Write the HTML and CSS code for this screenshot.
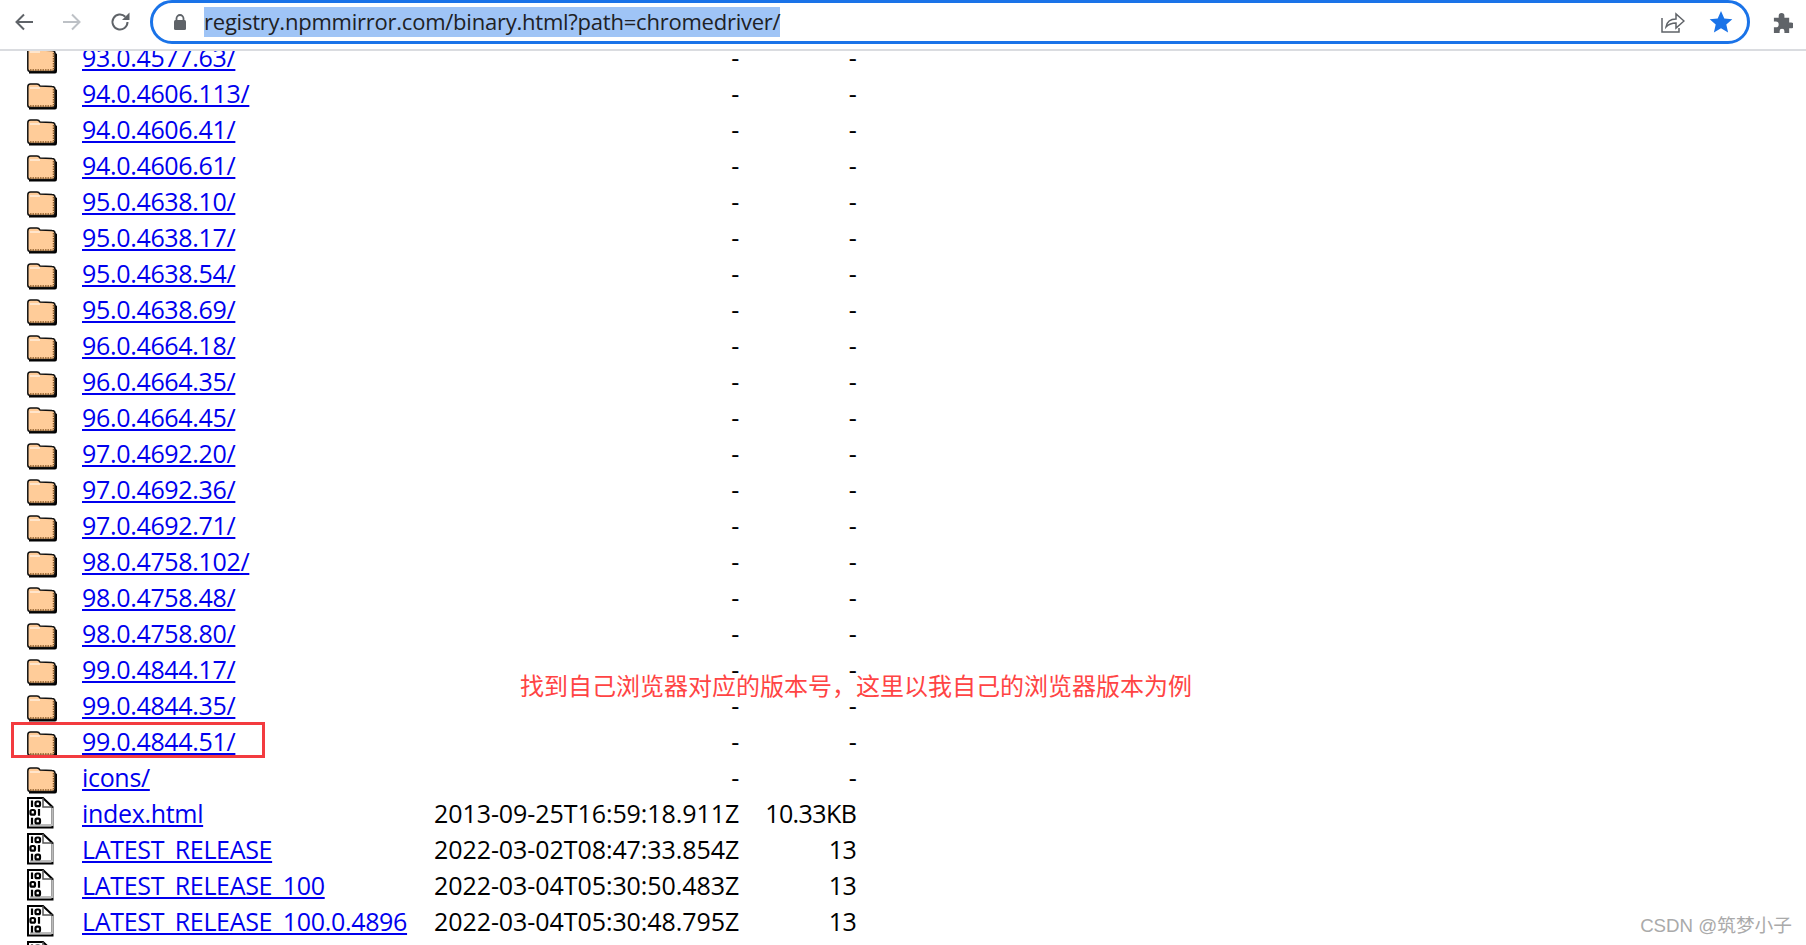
FILE: index.html
```html
<!DOCTYPE html>
<html lang="en">
<head>
    <meta charset="UTF-8">
    <meta name="viewport" content="width=device-width, initial-scale=1.0">
    <title>registry.npmmirror.com/binary.html?path=chromedriver/</title>
    <link rel="stylesheet" href="styles.css">
</head>
<body>
    <svg class="sprites" width="0" height="0">
        <symbol id="folder" viewBox="0 0 30 27">
            <path d="M2 26.500 L28 26.500 Q30 26.500 30 24 L30 7 L27 5 L27 24 L2 24 Z" fill="#000"/>
            <path d="M.8 4 Q.8 1 3.500 1 L10 1 Q12 1 13 3 L25 3.500 Q28 3.500 28 6.500 L28 22 Q28 24.500 25 24.500 L3.500 24.500 Q.8 24.500 .8 22 Z" fill="#fc9" stroke="#111" stroke-width="1.500"/>
            <path d="M3 5 L13 5" stroke="#fff" stroke-width="1"/>
            <path d="M3 23 L26.500 23 M26.500 6 L26.500 22" stroke="#8a5a28" stroke-width="1.500" stroke-dasharray="1.500 1"/>
        </symbol>
        <symbol id="binary" viewBox="0 0 27 32">
            <path d="M1 1 L16 1 L25.500 10 L25.500 30.500 L1 30.500 Z" fill="#fff" stroke="#000" stroke-width="2"/>
            <path d="M25.500 11 L25.500 28 L3 28" fill="none" stroke="#bbb" stroke-width="2"/>
            <path d="M16 1 L16 10 L25.500 10" fill="none" stroke="#555" stroke-width="1.500"/>
            <g fill="none" stroke="#000" stroke-width="2.200">
                <path d="M5 3.500 L5 10 M12 12 L12 18.700 M5 20.700 L5 27.500"/>
                <rect x="8.500" y="4.500" width="4.500" height="4.700" rx="1.500"/>
                <rect x="3.500" y="13" width="4.500" height="4.700" rx="1.500"/>
                <rect x="8.500" y="21.700" width="4.500" height="4.700" rx="1.500"/>
            </g>
        </symbol>
    </svg>

    <header class="toolbar">
        <svg class="tool-icon" viewBox="0 0 20 20"><path d="M19 10H3M10 2.500 2.500 10l7.500 7.500" fill="none" stroke="#5f6368" stroke-width="2"/></svg>
        <svg class="tool-icon" viewBox="0 0 20 20"><path d="M1 10h16M10 2.500l7.500 7.500-7.500 7.500" fill="none" stroke="#bdc1c6" stroke-width="2"/></svg>
        <svg class="tool-icon" viewBox="0 0 20 20"><path d="M17.500 10a7.500 7.500 0 1 1-2.200-5.300" fill="none" stroke="#5f6368" stroke-width="2"/><path d="M19.500 .5v7.500H12z" fill="#5f6368"/></svg>
        <div class="omnibox">
            <svg class="lock" viewBox="0 0 12 16"><path d="M2.500 7V4.500a3.500 3.500 0 0 1 7 0V7" fill="none" stroke="#5f6368" stroke-width="1.800"/><rect x="0" y="6" width="12" height="10" rx="1.500" fill="#5f6368"/></svg>
            <span class="url">registry.npmmirror.com/binary.html?path=chromedriver/</span>
            <svg class="share" viewBox="0 0 24 22"><path d="M1 7v14h17v-4" fill="none" stroke="#5f6368" stroke-width="1.500"/><path d="M5 16c1-6 5-8 10-8V3l8 7-8 7v-5c-4 0-7 1-10 4z" fill="none" stroke="#5f6368" stroke-width="1.500"/></svg>
            <svg class="star" viewBox="0 0 24 24"><path d="M12 1l3.300 7.500 8 .7-6 5.300 1.800 8L12 18.300 4.900 22.500l1.800-8-6-5.300 8-.7z" fill="#1a73e8"/></svg>
        </div>
        <svg class="puzzle" viewBox="0 0 22 22"><path d="M2 6h5V4a3 3 0 0 1 6 0v2h5v5h2a3 3 0 0 1 0 6h-2v5h-5v-2a2.500 2.500 0 0 0-5 0v2H2v-6h2a3 3 0 0 0 0-6H2z" fill="#5f6368"/></svg>
    </header>

    <main class="listing">
        <table class="files" id="files"></table>
        <div class="highlight-box"></div>
        <p class="note">找到自己浏览器对应的版本号，这里以我自己的浏览器版本为例</p>
        <p class="watermark">CSDN @筑梦小子</p>
    </main>

    <script>
        // 目录列表
        const dirs = ['93.0.4577.63/', '94.0.4606.113/', '94.0.4606.41/', '94.0.4606.61/', '95.0.4638.10/',
            '95.0.4638.17/', '95.0.4638.54/', '95.0.4638.69/', '96.0.4664.18/', '96.0.4664.35/', '96.0.4664.45/',
            '97.0.4692.20/', '97.0.4692.36/', '97.0.4692.71/', '98.0.4758.102/', '98.0.4758.48/', '98.0.4758.80/',
            '99.0.4844.17/', '99.0.4844.35/', '99.0.4844.51/', 'icons/'];
        const files = [
            ['index.html', '2013-09-25T16:59:18.911Z', '10.33KB'],
            ['LATEST_RELEASE', '2022-03-02T08:47:33.854Z', '13'],
            ['LATEST_RELEASE_100', '2022-03-04T05:30:50.483Z', '13'],
            ['LATEST_RELEASE_100.0.4896', '2022-03-04T05:30:48.795Z', '13'],
            ['', '', '']
        ];

        function row(icon, name, date, size) {
            const link = name ? `<a href="#">${name}</a>` : '';
            return `<tr><td class="icon"><svg class="${icon}"><use href="#${icon}"/></svg></td>` +
                `<td class="name">${link}</td><td class="date">${date}</td><td class="size">${size}</td></tr>`;
        }

        document.getElementById('files').innerHTML =
            dirs.map(d => row('folder', d, '-', '-')).join('') +
            files.map(f => row('binary', f[0], f[1], f[2])).join('');
    </script>
</body>
</html>
```

FILE: styles.css
```css
* {
    box-sizing: border-box;
    margin: 0;
    padding: 0;
}
html, body {
    height: 100%;
    overflow: hidden;
}
body {
    display: flex;
    flex-direction: column;
    background: white;
    font-family: 'Open Sans', 'Noto Sans CJK SC', sans-serif;
}
.sprites {
    position: absolute;
}
.toolbar {
    flex: none;
    height: 51px;
    display: flex;
    align-items: flex-start;
    background: white;
    border-bottom: 2px solid #dadce0;
    padding-left: 14px;
}
.tool-icon {
    width: 20px;
    height: 20px;
    margin: 12px 28px 0 0;
}
.tool-icon:nth-child(3) {
    margin-right: 22px;
}
.omnibox {
    width: 1597px;
    height: 44px;
    margin-left: -2px;
    flex: none;
    width: 1600px;
    display: flex;
    align-items: center;
    border: 3px solid #1a73e8;
    border-radius: 22px;
    padding-left: 21px;
}
.lock {
    width: 12px;
    height: 16px;
    margin-right: 18px;
}
.url {
    height: 30px;
    line-height: 29px;
    background: #9fc4f6;
    color: #202124;
    font-size: 22px;
    white-space: nowrap;
    letter-spacing: -0.23px;
}
.share {
    width: 24px;
    height: 22px;
    margin-left: auto;
}
.star {
    width: 24px;
    height: 24px;
    margin: 0 14px 0 24px;
}
.puzzle {
    width: 21px;
    height: 21px;
    margin: 12px 0 0 22px;
}
.listing {
    flex: 1;
    position: relative;
    overflow: hidden;
}
.files {
    border-collapse: collapse;
    margin: -12px 0 0 27px;
    font-size: 25px;
    letter-spacing: -0.32px;
    color: black;
}
.files tr {
    height: 36px;
}
.files td {
    padding: 0;
    line-height: 36px;
    white-space: nowrap;
}
.files a {
    color: #0000ee;
    text-decoration-skip-ink: none;
}
.icon {
    width: 55px;
    vertical-align: middle;
}
.icon svg {
    display: block;
}
.folder {
    width: 30px;
    height: 27px;
    margin-top: 6px;
}
.binary {
    width: 27px;
    height: 32px;
}
.name {
    width: 352px;
}
.date {
    width: 305px;
    text-align: right;
    letter-spacing: -0.07px;
}
.size {
    width: 117px;
    text-align: right;
    letter-spacing: -0.6px;
}
.highlight-box {
    position: absolute;
    left: 11px;
    top: 671px;
    width: 254px;
    height: 36px;
    border: 3px solid #f33b3f;
}
.note {
    position: absolute;
    left: 520px;
    top: 617px;
    font-size: 24px;
    line-height: 36px;
    color: #f44;
    white-space: nowrap;
}
.watermark {
    position: absolute;
    right: 14px;
    bottom: 8px;
    font-family: 'Liberation Sans', 'Noto Sans CJK SC', sans-serif;
    font-size: 18.700px;
    color: #aaa;
    white-space: nowrap;
}
```
